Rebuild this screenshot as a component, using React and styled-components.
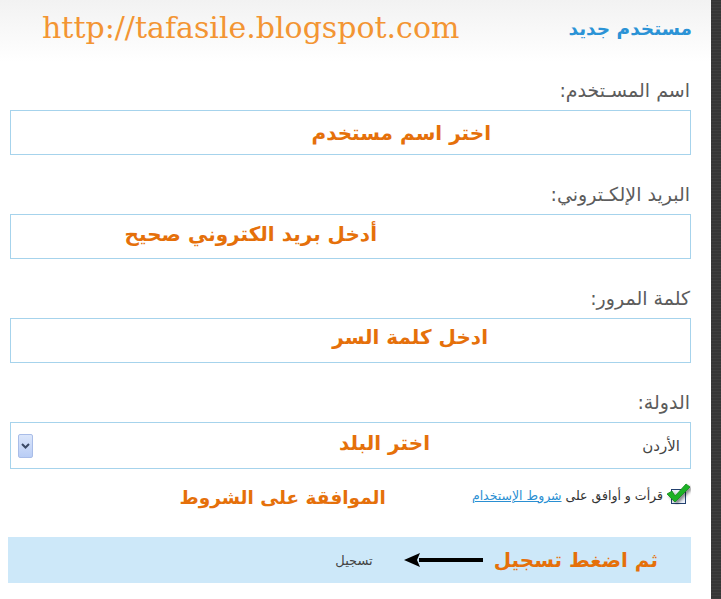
import styled, { createGlobalStyle } from "styled-components";

const GlobalStyle = createGlobalStyle`
  html, body {
    margin: 0;
    padding: 0;
    background: #ffffff;
  }
  body {
    font-family: "DejaVu Sans", "Noto Sans", sans-serif;
  }
`;

const Page = styled.div`
  display: flex;
  width: 721px;
  height: 599px;
  overflow: hidden;
`;

const Panel = styled.main`
  width: 711px;
  background: #ffffff;
  direction: rtl;
`;

const Strip = styled.div`
  width: 10px;
  background-color: #363636;
  background-image: repeating-linear-gradient(
    0deg,
    rgba(255, 255, 255, 0.04) 0 1px,
    transparent 1px 3px
  );
`;

const Header = styled.header`
  height: 56px;
  display: flex;
  align-items: center;
  justify-content: space-between;
  padding: 0 19px 6px 42px;
  background: linear-gradient(#f2f2f2, #ffffff);
`;

const Title = styled.h1`
  margin: 0;
  font-size: 18.5px;
  font-weight: bold;
  color: #2b93d6;
`;

const SiteUrl = styled.span`
  direction: ltr;
  font-family: "DejaVu Serif", "Liberation Serif", serif;
  font-size: 30px;
  color: #f39533;
  margin-top: -2px;
`;

const Form = styled.div`
  padding: 18px 20px 0 10px;
`;

const Field = styled.div`
  margin-bottom: ${(p) => p.$gap ?? 29}px;
`;

const Label = styled.div`
  height: 20px;
  line-height: 20px;
  font-size: 19px;
  color: #5c5c5c;
  margin-bottom: 10px;
  padding-right: 1px;
`;

const Box = styled.div`
  box-sizing: border-box;
  height: ${(p) => p.$h || 45}px;
  border: 1px solid #a6d3ec;
  display: flex;
  align-items: center;
  padding-right: ${(p) => p.$offset}px;
  padding-left: 7px;
`;

const Hint = styled.span`
  font-size: ${(p) => p.$size || 20}px;
  font-weight: bold;
  color: #e5700a;
  margin-top: ${(p) => p.$top || 0}px;
`;

const Country = styled.span`
  font-size: 15px;
  color: #444;
  width: ${(p) => p.$w}px;
`;

const Spacer = styled.span`
  flex: 1;
`;

const DropButton = styled.span`
  width: 15px;
  height: 24px;
  border-radius: 2px;
  border: 1px solid #a9bde8;
  box-sizing: border-box;
  background: linear-gradient(#dbe6fb, #b9cdf5);
  display: flex;
  align-items: center;
  justify-content: center;
`;

const AgreeRow = styled.div`
  display: flex;
  align-items: flex-start;
  margin-top: 12px;
  height: 56px;
`;

const Check = styled.span`
  display: inline-flex;
  width: 26px;
  height: 24px;
  margin-left: 2px;
`;

const AgreeText = styled.span`
  font-size: 12.5px;
  color: #333;
  line-height: 20px;
  margin-top: 5px;
  margin-left: 86px;

  a {
    color: #2a8fd2;
    text-decoration: underline;
  }
`;

const Bar = styled.div`
  margin-left: -2px;
  height: 46px;
  background: #cde8f9;
  display: flex;
  align-items: center;
  padding-right: 33px;
`;

const Submit = styled.span`
  font-size: 13px;
  color: #444;
  margin-right: 30px;
`;

const Arrow = () => (
  <svg width="82" height="16" viewBox="0 0 82 16" style={{ marginRight: 9 }}>
    <path d="M16 6 H80 V10 H16 Z" fill="#000" />
    <path d="M1 8 L17 1 L14 8 L17 15 Z" fill="#000" />
  </svg>
);

const CheckMark = () => (
  <svg width="26" height="24" viewBox="0 0 26 24">
    <defs>
      <filter id="sh" x="-30%" y="-30%" width="160%" height="160%">
        <feDropShadow dx="2" dy="2" stdDeviation="1.5" floodColor="#000" floodOpacity="0.45" />
      </filter>
    </defs>
    <rect x="6.5" y="8.5" width="14" height="14" fill="#eef3fb" stroke="#23416f" strokeWidth="1" />
    <path
      d="M2 13 L7 10 L10 15 L21 3 L25 6 L10 21 Z"
      fill="#1fb227"
      stroke="#148a1b"
      strokeWidth="0.8"
      filter="url(#sh)"
    />
  </svg>
);

const Chevron = () => (
  <svg width="9" height="6" viewBox="0 0 9 6">
    <path d="M1 1 L4.5 4.5 L8 1" stroke="#3b4a66" strokeWidth="2" fill="none" />
  </svg>
);

export default function App() {
  return (
    <>
      <GlobalStyle />
      <Page>
        <Panel>
          <Header>
            <Title>مستخدم جديد</Title>
            <SiteUrl>http://tafasile.blogspot.com</SiteUrl>
          </Header>
          <Form>
            <Field>
              <Label>اسم المسـتخدم:</Label>
              <Box $offset={199}>
                <Hint>اختر اسم مستخدم</Hint>
              </Box>
            </Field>
            <Field>
              <Label>البريد الإلكـتروني:</Label>
              <Box $offset={313}>
                <Hint $top={-6}>أدخل بريد الكتروني صحيح</Hint>
              </Box>
            </Field>
            <Field>
              <Label>كلمة المرور:</Label>
              <Box $offset={202}>
                <Hint $top={-8}>ادخل كلمة السر</Hint>
              </Box>
            </Field>
            <Field $gap={0}>
              <Label>الدولة:</Label>
              <Box $h={47} $offset={10}>
                <Country $w={250}>الأردن</Country>
                <Hint $top={-5}>اختر البلد</Hint>
                <Spacer />
                <DropButton>
                  <Chevron />
                </DropButton>
              </Box>
            </Field>
            <AgreeRow>
              <Check>
                <CheckMark />
              </Check>
              <AgreeText>
                قرأت و أوافق على <a href="#terms">شروط الإستخدام</a>
              </AgreeText>
              <Hint $top={6} $size={18.5}>
                الموافقة على الشروط
              </Hint>
            </AgreeRow>
            <Bar>
              <Hint>ثم اضغط تسجيل</Hint>
              <Arrow />
              <Submit>تسجيل</Submit>
            </Bar>
          </Form>
        </Panel>
        <Strip />
      </Page>
    </>
  );
}
